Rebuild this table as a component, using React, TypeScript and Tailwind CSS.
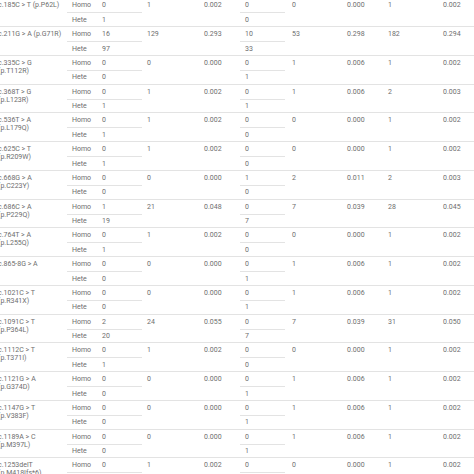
type Row = {
  v: string[];
  a: [string, string];
  at: string;
  af: string;
  b: [string, string];
  bt: string;
  bf: string;
  ct: string;
  cf: string;
};

const rows: Row[] = [
  { v: ['c.185C > T (p.P62L)'], a: ['0', '1'], at: '1', af: '0.002', b: ['0', '0'], bt: '0', bf: '0.000', ct: '1', cf: '0.002' },
  { v: ['c.211G > A (p.G71R)'], a: ['16', '97'], at: '129', af: '0.293', b: ['10', '33'], bt: '53', bf: '0.298', ct: '182', cf: '0.294' },
  { v: ['c.335C > G', '(p.T112R)'], a: ['0', '0'], at: '0', af: '0.000', b: ['0', '1'], bt: '1', bf: '0.006', ct: '1', cf: '0.002' },
  { v: ['c.368T > G', '(p.L123R)'], a: ['0', '1'], at: '1', af: '0.002', b: ['0', '1'], bt: '1', bf: '0.006', ct: '2', cf: '0.003' },
  { v: ['c.536T > A', '(p.L179Q)'], a: ['0', '1'], at: '1', af: '0.002', b: ['0', '0'], bt: '0', bf: '0.000', ct: '1', cf: '0.002' },
  { v: ['c.625C > T', '(p.R209W)'], a: ['0', '1'], at: '1', af: '0.002', b: ['0', '0'], bt: '0', bf: '0.000', ct: '1', cf: '0.002' },
  { v: ['c.668G > A', '(p.C223Y)'], a: ['0', '0'], at: '0', af: '0.000', b: ['1', '0'], bt: '2', bf: '0.011', ct: '2', cf: '0.003' },
  { v: ['c.686C > A', '(p.P229Q)'], a: ['1', '19'], at: '21', af: '0.048', b: ['0', '7'], bt: '7', bf: '0.039', ct: '28', cf: '0.045' },
  { v: ['c.764T > A', '(p.L255Q)'], a: ['0', '1'], at: '1', af: '0.002', b: ['0', '0'], bt: '0', bf: '0.000', ct: '1', cf: '0.002' },
  { v: ['c.865-8G > A'], a: ['0', '0'], at: '0', af: '0.000', b: ['0', '1'], bt: '1', bf: '0.006', ct: '1', cf: '0.002' },
  { v: ['c.1021C > T', '(p.R341X)'], a: ['0', '0'], at: '0', af: '0.000', b: ['0', '1'], bt: '1', bf: '0.006', ct: '1', cf: '0.002' },
  { v: ['c.1091C > T', '(p.P364L)'], a: ['2', '20'], at: '24', af: '0.055', b: ['0', '7'], bt: '7', bf: '0.039', ct: '31', cf: '0.050' },
  { v: ['c.1112C > T', '(p.T371I)'], a: ['0', '1'], at: '1', af: '0.002', b: ['0', '0'], bt: '0', bf: '0.000', ct: '1', cf: '0.002' },
  { v: ['c.1121G > A', '(p.G374D)'], a: ['0', '0'], at: '0', af: '0.000', b: ['0', '1'], bt: '1', bf: '0.006', ct: '1', cf: '0.002' },
  { v: ['c.1147G > T', '(p.V383F)'], a: ['0', '0'], at: '0', af: '0.000', b: ['0', '1'], bt: '1', bf: '0.006', ct: '1', cf: '0.002' },
  { v: ['c.1189A > C', '(p.M397L)'], a: ['0', '0'], at: '0', af: '0.000', b: ['0', '1'], bt: '1', bf: '0.006', ct: '1', cf: '0.002' },
  { v: ['c.1253delT', '(p.M418Ifs*6)'], a: ['0', '1'], at: '1', af: '0.002', b: ['0', '0'], bt: '0', bf: '0.000', ct: '1', cf: '0.002' },
];

const top = 'pt-[3px] border-b border-[#e3e3e3]';
const bot = 'pt-[2.5px]';
const span = 'row-span-2 pt-[3px]';

export default function App() {
  return (
    <div
      className="w-[474px] h-[474px] overflow-hidden bg-white text-[7px] leading-[8px] text-[#6e6e6e]"
      style={{ fontFamily: 'Roboto, "Liberation Sans", sans-serif' }}
    >
      <div className="-mt-[1.75px] -ml-[2px]">
        {rows.map((r, i) => (
          <div
            key={i}
            className="grid grid-cols-[69px_30px_45px_57px_41px_45px_57px_41px_55px_1fr] grid-rows-[15px_12.75px] border-b border-[#e3e3e3] whitespace-nowrap"
          >
            <div className={span}>
              {r.v.map((t, j) => (
                <div key={j}>{t}</div>
              ))}
            </div>
            <div className={`${top} pl-[5px]`}>Homo</div>
            <div className={`${top} pl-[5px]`}>{r.a[0]}</div>
            <div className={`${span} pl-[5px]`}>{r.at}</div>
            <div className={`${span} pl-[5px]`}>{r.af}</div>
            <div className={`${top} pl-[5px]`}>{r.b[0]}</div>
            <div className={`${span} pl-[7px]`}>{r.bt}</div>
            <div className={`${span} pl-[5px]`}>{r.bf}</div>
            <div className={`${span} pl-[5px]`}>{r.ct}</div>
            <div className={`${span} pl-[5px]`}>{r.cf}</div>
            <div className={`${bot} pl-[5px] col-start-2`}>Hete</div>
            <div className={`${bot} pl-[5px]`}>{r.a[1]}</div>
            <div className={`${bot} pl-[5px] col-start-6`}>{r.b[1]}</div>
          </div>
        ))}
      </div>
    </div>
  );
}
